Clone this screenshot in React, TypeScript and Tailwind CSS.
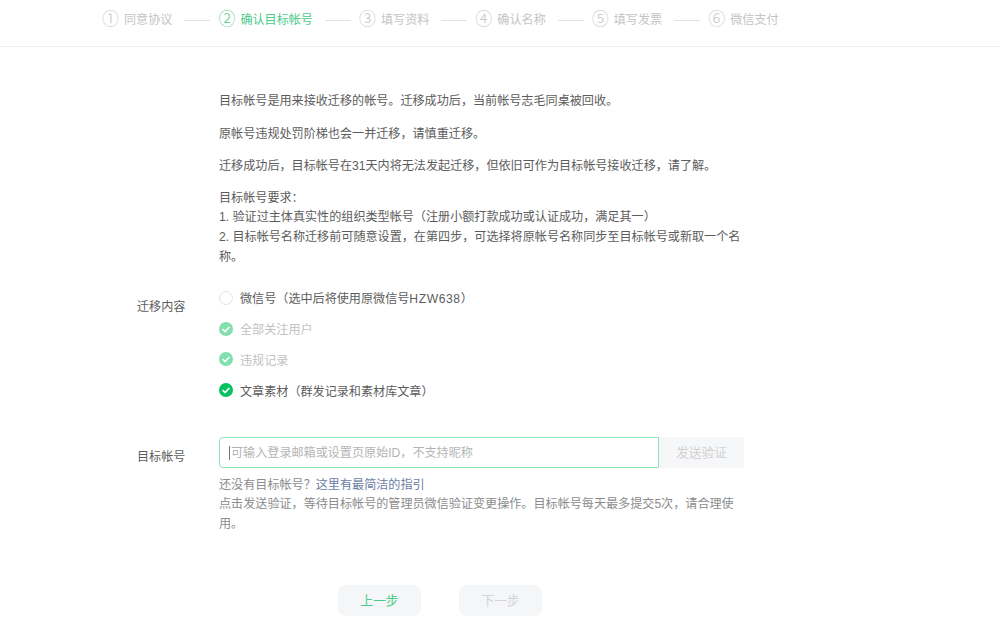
const FONT = '"Liberation Sans", "Noto Sans CJK SC", sans-serif';

const C = '\uFF0C';
const L = '\uFF08';
const R = '\uFF09';

const steps = [
  { n: '①', t: '同意协议' },
  { n: '②', t: '确认目标帐号', active: true },
  { n: '③', t: '填写资料' },
  { n: '④', t: '确认名称' },
  { n: '⑤', t: '填写发票' },
  { n: '⑥', t: '微信支付' },
];

function Check({ dim }: { dim?: boolean }) {
  return (
    <svg width="14" height="14" viewBox="0 0 14 14" className={dim ? 'opacity-50' : ''}>
      <circle cx="7" cy="7" r="7" fill="#07c160" />
      <path d="M3.6 7.2 L6 9.5 L10.4 5" fill="none" stroke="#fff" strokeWidth="1.7" />
    </svg>
  );
}

function Option({ icon, children, muted }: { icon: React.ReactNode; children: React.ReactNode; muted?: boolean }) {
  return (
    <div className={`flex h-[30.8px] items-center gap-[7px] ${muted ? 'text-[#c2c2c2]' : 'text-[#5c5c5c]'}`}>
      {icon}
      <span className="pt-[3px]">{children}</span>
    </div>
  );
}

export default function App() {
  return (
    <div className="h-[619px] w-[1000px] overflow-hidden bg-white text-[12.1px] leading-[20px] text-[#5c5c5c]" style={{ fontFamily: FONT }}>
      <header className="flex h-[47px] items-start border-b border-[#efefef] pl-[102px] pt-[10px]">
        {steps.map((s, i) => (
          <div key={s.t} className={`flex h-[20px] items-center ${s.active ? 'text-[#4ccb8a]' : 'text-[#c4c4c4]'}`}>
            <span className="w-[16px] text-center text-[17px] leading-[20px] font-light">{s.n}</span>
            <span className="ml-[6px]">{s.t}</span>
            {i < steps.length - 1 && <span className="mr-[8px] ml-[12px] h-px w-[26px] bg-[#e3e3e3]" />}
          </div>
        ))}
      </header>

      <main className="pl-[137px]">
        <section className="ml-[82px] w-[525px] pt-[44px]">
          <p>{`目标帐号是用来接收迁移的帐号。迁移成功后${C}当前帐号志毛同桌被回收。`}</p>
          <p className="mt-[12.5px]">{`原帐号违规处罚阶梯也会一并迁移${C}请慎重迁移。`}</p>
          <p className="mt-[12.5px]">{`迁移成功后${C}目标帐号在31天内将无法发起迁移${C}但依旧可作为目标帐号接收迁移${C}请了解。`}</p>
          <p className="mt-[12.5px] leading-[19.7px]">
            {'目标帐号要求\uFF1A'}
            <br />
            {`1. 验证过主体真实性的组织类型帐号${L}注册小额打款成功或认证成功${C}满足其一${R}`}
            <br />
            {`2. 目标帐号名称迁移前可随意设置${C}在第四步${C}可选择将原帐号名称同步至目标帐号或新取一个名称。`}
          </p>
        </section>

        <section className="mt-[15px] flex">
          <div className="w-[82px] pt-[15px]">迁移内容</div>
          <div>
            <Option icon={<span className="h-[14px] w-[14px] rounded-full border border-[#e4e4e4]" />}>
              {`微信号${L}选中后将使用原微信号`}
              <span className="tracking-[0.6px]">HZW638</span>
              {R}
            </Option>
            <Option muted icon={<Check dim />}>全部关注用户</Option>
            <Option muted icon={<Check dim />}>违规记录</Option>
            <Option icon={<Check />}>{`文章素材${L}群发记录和素材库文章${R}`}</Option>
          </div>
        </section>

        <section className="mt-[31px] flex">
          <div className="w-[82px] pt-[10px]">目标帐号</div>
          <div className="w-[525px]">
            <div className="flex h-[31px]">
              <div className="flex w-[440px] items-center rounded-l-[4px] border border-[#8fe3b7] pl-[9px] pt-px text-[#b4b4b4]">
                <span className="mr-px h-[14px] w-px bg-[#777]" />
                {`可输入登录邮箱或设置页原始ID${C}不支持昵称`}
              </div>
              <div className="flex w-[85px] items-center justify-center rounded-r-[2px] bg-[#f6f7f9] pt-px text-[12.7px] text-[#d2d2d2]">发送验证</div>
            </div>
            <p className="mt-[8px] leading-[19.5px] text-[#8c8c8c]">
              {'还没有目标帐号\uFF1F'}<span className="text-[#6a7da3]">这里有最简洁的指引</span>
              <br />
              {`点击发送验证${C}等待目标帐号的管理员微信验证变更操作。目标帐号每天最多提交5次${C}请合理使用。`}
            </p>
          </div>
        </section>

        <section className="mt-[51px] ml-[201px] flex gap-[38px]">
          <button className="h-[31px] w-[83px] rounded-[8px] bg-[#f5f6f8] text-[12.7px] text-[#4ccb8a]">上一步</button>
          <button className="h-[31px] w-[83px] rounded-[8px] bg-[#f5f6f8] text-[12.7px] text-[#d4d4d4]">下一步</button>
        </section>
      </main>
    </div>
  );
}
